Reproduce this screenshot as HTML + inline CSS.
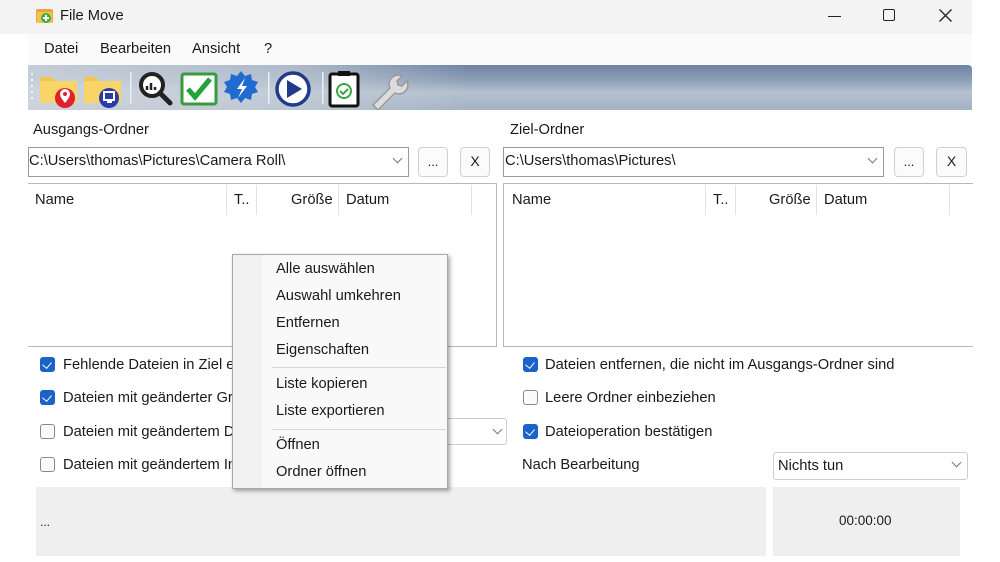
<!DOCTYPE html>
<html><head><meta charset="utf-8"><style>
*{margin:0;padding:0;box-sizing:border-box}
body{width:1000px;height:562px;background:#fff;position:relative;overflow:hidden;font-family:"Segoe UI","Liberation Sans",sans-serif;font-size:14.7px;color:#1a1a1a}
.a{position:absolute;white-space:nowrap}
.t{line-height:18px}
.cb{position:absolute;width:15px;height:15px;border-radius:3px}
.on{background:#1a63c9}
.on:after{content:"";position:absolute;left:4px;top:3px;width:5px;height:7px;border:solid #fff;border-width:0 1.5px 1.5px 0;transform:rotate(40deg)}
.off{border:1px solid #8a8a8a;background:#fafafa}
.box{position:absolute;border:1px solid #b8b8b8;background:#fff}
.btn{position:absolute;border:1px solid #d0d0d0;border-radius:4px;background:#fbfbfb;text-align:center;line-height:27px;font-size:13px}
.chev{position:absolute;width:7px;height:7px;border:solid #777;border-width:0 1px 1px 0;transform:rotate(45deg)}
.sep{position:absolute;width:1px;background:#e2e2e2}
.mi{position:absolute;left:276px;font-size:14.7px;line-height:18px}
</style></head><body>
<div class="a" style="left:0;top:0;width:972px;height:34px;background:#f3f3f3"></div>
<div class="a" style="left:28px;top:34px;width:944px;height:31px;background:#fafafa"></div>
<svg class="a" style="left:35px;top:6px" width="20" height="20" viewBox="0 0 20 20"><rect x="1" y="3" width="17" height="14" rx="2" fill="#e9a43a"/><rect x="2" y="6" width="15" height="11" fill="#f6c445"/><circle cx="11" cy="12" r="5" fill="#3fae49"/><path d="M11 9v6M8 12h6" stroke="#fff" stroke-width="2"/></svg>
<div class="a t" style="left:60px;top:7px">File Move</div>
<div class="a" style="left:828px;top:16px;width:13px;height:1px;background:#222"></div>
<div class="a" style="left:883px;top:9px;width:12px;height:12px;border:1px solid #222;border-radius:2px"></div>
<svg class="a" style="left:939px;top:9px" width="13" height="13"><path d="M0.5 0.5l12 12M12.5 0.5l-12 12" stroke="#222" stroke-width="1.3"/></svg>
<div class="a t" style="left:44px;top:40px">Datei</div>
<div class="a t" style="left:100px;top:40px">Bearbeiten</div>
<div class="a t" style="left:192px;top:40px">Ansicht</div>
<div class="a t" style="left:264px;top:40px">?</div>
<div class="a" style="left:28px;top:65px;width:944px;height:45px;border-radius:0 4px 0 0;background:linear-gradient(180deg,#6f84a2 0%,#8ea1b9 35%,#b5c1cf 60%,#a3b2c4 100%)"></div>
<div class="a" style="left:28px;top:65px;width:440px;height:45px;background:linear-gradient(90deg,rgba(210,216,224,.85) 0%,rgba(200,208,218,.7) 60%,rgba(200,208,218,0) 100%)"></div>
<svg class="a" style="left:28px;top:65px" width="400" height="45" viewBox="0 0 400 45">
<g fill="#fff" opacity=".8"><rect x="3" y="8" width="2" height="2"/><rect x="3" y="14" width="2" height="2"/><rect x="3" y="20" width="2" height="2"/><rect x="3" y="26" width="2" height="2"/><rect x="3" y="32" width="2" height="2"/></g>
<path d="M12 12h12l3 4h22v22H12z" fill="#f3c54a"/><path d="M12 16h37v22H12z" fill="#f8d566"/>
<circle cx="37" cy="33" r="10" fill="#e0202a"/><path d="M37 38c-4-5-5-7-5-9a5 5 0 0 1 10 0c0 2-1 4-5 9z" fill="#fff"/><circle cx="37" cy="29" r="2" fill="#e0202a"/>
<path d="M56 12h12l3 4h22v22H56z" fill="#f3c54a"/><path d="M56 16h37v22H56z" fill="#f8d566"/>
<circle cx="81" cy="33" r="10" fill="#2a3aa8"/><rect x="76" y="27" width="10" height="8" fill="none" stroke="#fff" stroke-width="2"/><rect x="79" y="35" width="5" height="3" fill="#fff"/>
<rect x="102" y="7" width="1.5" height="32" fill="#eee"/>
<circle cx="124" cy="20" r="11" fill="#fff" stroke="#222" stroke-width="4"/><path d="M132 28l10 10" stroke="#222" stroke-width="5" stroke-linecap="round"/><path d="M119 25v-4M123 25v-7M127 25v-3" stroke="#222" stroke-width="2.5"/>
<rect x="154" y="9" width="34" height="30" rx="2" fill="#fff" stroke="#3a9a3e" stroke-width="3"/><path d="M160 24l7 8 15-18" fill="none" stroke="#23a23a" stroke-width="5"/>
<path d="M213 6l4 5 6-2 1 6 6 2-3 5 3 5-6 2-1 6-6-2-4 5-4-5-6 2-1-6-6-2 3-5-3-5 6-2 1-6 6 2z" fill="#1f6bd0"/><path d="M217 13l-8 11h5l-4 9 9-12h-5z" fill="#fff"/>
<rect x="240" y="7" width="1.5" height="32" fill="#eee"/>
<circle cx="265" cy="24" r="16" fill="#fff" stroke="#223a8a" stroke-width="3.5"/><path d="M259 15v18l15-9z" fill="#223a8a"/>
<rect x="294" y="7" width="1.5" height="32" fill="#eee"/>
<rect x="302" y="9" width="28" height="32" rx="2" fill="#fff" stroke="#111" stroke-width="3"/><rect x="310" y="6" width="12" height="5" fill="#111"/><circle cx="316" cy="26" r="7" fill="none" stroke="#3aa44a" stroke-width="2"/><path d="M312 26l3 3 5-5" fill="none" stroke="#3aa44a" stroke-width="2"/>
<path d="M345 40l17-17a9 9 0 0 1 12-12l-5 5 1 4 4 1 5-5a9 9 0 0 1-12 12l-17 17z" fill="#dcdcdc" stroke="#999" stroke-width="1.5"/>
</svg>
<div class="a t" style="left:33px;top:121px">Ausgangs-Ordner</div>
<div class="box" style="left:28px;top:147px;width:381px;height:30px;border-color:#999"></div>
<div class="a t" style="left:29px;top:152px">C:\Users\thomas\Pictures\Camera Roll\</div>
<div class="chev" style="left:394px;top:155px"></div>
<div class="btn" style="left:418px;top:147px;width:30px;height:30px">...</div>
<div class="btn" style="left:460px;top:147px;width:30px;height:30px;font-size:14px">X</div>
<div class="box" style="left:28px;top:183px;width:469px;height:164px;border-left:none"></div>
<div class="a t" style="left:35px;top:191px">Name</div>
<div class="a t" style="left:234px;top:191px">T..</div>
<div class="a t" style="left:291px;top:191px">Größe</div>
<div class="a t" style="left:346px;top:191px">Datum</div>
<div class="sep" style="left:226px;top:185px;height:30px"></div>
<div class="sep" style="left:256px;top:185px;height:30px"></div>
<div class="sep" style="left:338px;top:185px;height:30px"></div>
<div class="sep" style="left:471px;top:185px;height:30px"></div>
<div class="a t" style="left:510px;top:121px">Ziel-Ordner</div>
<div class="box" style="left:503px;top:147px;width:381px;height:30px;border-color:#999"></div>
<div class="a t" style="left:505px;top:152px">C:\Users\thomas\Pictures\</div>
<div class="chev" style="left:869px;top:155px"></div>
<div class="btn" style="left:894px;top:147px;width:30px;height:30px">...</div>
<div class="btn" style="left:936px;top:147px;width:31px;height:30px;font-size:14px">X</div>
<div class="box" style="left:503px;top:183px;width:470px;height:164px;border-right:none"></div>
<div class="a t" style="left:512px;top:191px">Name</div>
<div class="a t" style="left:713px;top:191px">T..</div>
<div class="a t" style="left:769px;top:191px">Größe</div>
<div class="a t" style="left:824px;top:191px">Datum</div>
<div class="sep" style="left:705px;top:185px;height:30px"></div>
<div class="sep" style="left:735px;top:185px;height:30px"></div>
<div class="sep" style="left:816px;top:185px;height:30px"></div>
<div class="sep" style="left:949px;top:185px;height:30px"></div>
<div class="cb on" style="left:40px;top:357px"></div><div class="a t" style="left:63px;top:356px">Fehlende Dateien in Ziel einfügen</div>
<div class="cb on" style="left:40px;top:390px"></div><div class="a t" style="left:63px;top:389px">Dateien mit geänderter Größe</div>
<div class="cb off" style="left:40px;top:424px"></div><div class="a t" style="left:63px;top:423px">Dateien mit geändertem Datum</div>
<div class="cb off" style="left:40px;top:457px"></div><div class="a t" style="left:63px;top:456px">Dateien mit geändertem Inhalt</div>
<div class="box" style="left:300px;top:418px;width:207px;height:27px;border-color:#ccc;border-radius:3px"></div>
<div class="chev" style="left:494px;top:426px"></div>
<div class="cb on" style="left:523px;top:357px"></div><div class="a t" style="left:545px;top:356px">Dateien entfernen, die nicht im Ausgangs-Ordner sind</div>
<div class="cb off" style="left:523px;top:390px"></div><div class="a t" style="left:545px;top:389px">Leere Ordner einbeziehen</div>
<div class="cb on" style="left:523px;top:424px"></div><div class="a t" style="left:545px;top:423px">Dateioperation bestätigen</div>
<div class="a t" style="left:522px;top:456px">Nach Bearbeitung</div>
<div class="box" style="left:773px;top:452px;width:195px;height:28px;border-color:#ccc;border-radius:3px"></div>
<div class="a t" style="left:778px;top:457px">Nichts tun</div>
<div class="chev" style="left:953px;top:459px"></div>
<div class="a" style="left:36px;top:487px;width:730px;height:69px;background:#efefef"></div>
<div class="a t" style="left:40px;top:513px;font-size:12px">...</div>
<div class="a" style="left:773px;top:487px;width:187px;height:69px;background:#efefef"></div>
<div class="a t" style="left:839px;top:512px;font-size:13.5px">00:00:00</div>
<div class="a" style="left:232px;top:254px;width:216px;height:235px;background:#f9f9f9;border:1px solid #a8a8a8;box-shadow:2px 2px 4px rgba(0,0,0,.35)"></div>
<div class="a" style="left:233px;top:255px;width:29px;height:233px;background:#f1f1f1"></div>
<div class="mi" style="top:260px">Alle auswählen</div>
<div class="mi" style="top:287px">Auswahl umkehren</div>
<div class="mi" style="top:314px">Entfernen</div>
<div class="mi" style="top:341px">Eigenschaften</div>
<div class="a" style="left:272px;top:367px;width:174px;height:1px;background:#d6d6d6"></div>
<div class="mi" style="top:375px">Liste kopieren</div>
<div class="mi" style="top:402px">Liste exportieren</div>
<div class="a" style="left:272px;top:429px;width:174px;height:1px;background:#d6d6d6"></div>
<div class="mi" style="top:436px">Öffnen</div>
<div class="mi" style="top:463px">Ordner öffnen</div>
</body></html>
